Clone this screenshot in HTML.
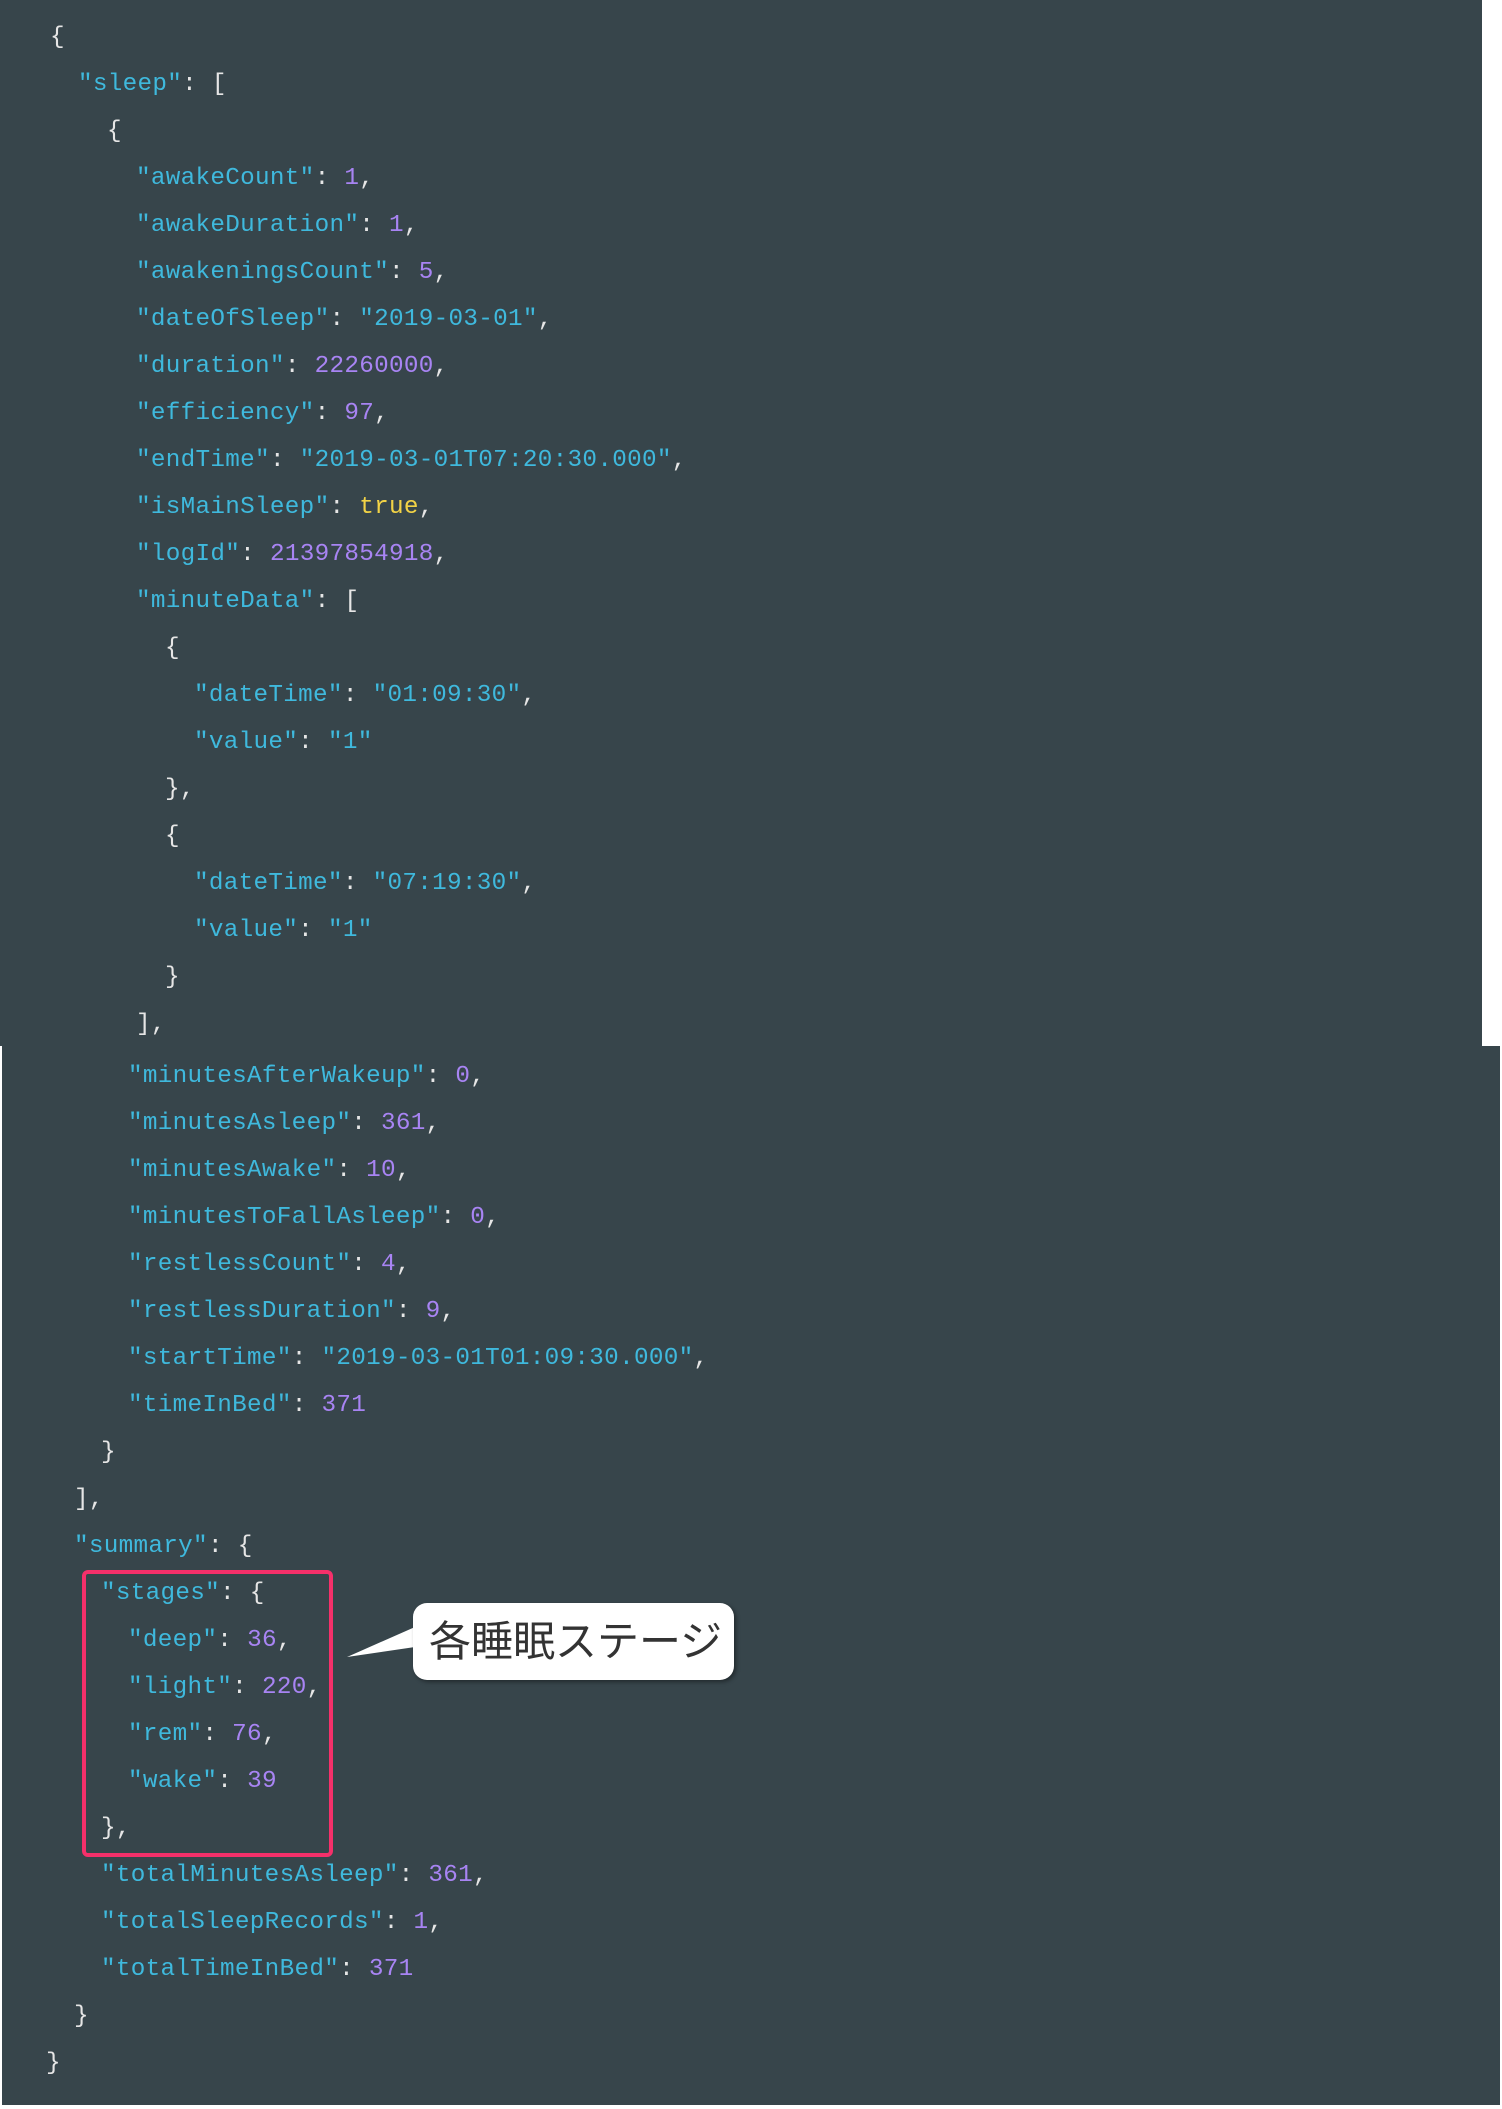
<!DOCTYPE html>
<html><head><meta charset="utf-8"><style>
body{margin:0;width:1502px;height:2109px;background:#fff;position:relative;overflow:hidden;font-family:"Liberation Mono",monospace;}
.p{position:absolute;background:#37454b;}
.l{position:absolute;height:47px;line-height:47px;font-size:24.3px;color:#e6e6e6;white-space:pre;letter-spacing:0.3px}
.k{color:#3fb9dd}.n{color:#a884f3}.s{color:#3fb9dd}.t{color:#f2d346}
</style></head><body>
<div class="p" style="left:0;top:0;width:1482px;height:1046px"></div>
<div class="p" style="left:2px;top:1046px;width:1498px;height:1059px"></div>
<div id="a"></div>
<div style="position:absolute;left:82px;top:1570px;width:243px;height:279px;border:4px solid #f5306a;border-radius:6px"></div>
<svg style="position:absolute;left:340px;top:1600px" width="400" height="90"><polygon points="7,57 75,27 75,47" fill="#fff"/></svg>
<div style="position:absolute;left:413px;top:1603px;width:321px;height:77px;background:#fff;border-radius:14px;box-shadow:2px 2px 4px rgba(0,0,0,.4);font-family:'Liberation Sans','Noto Sans CJK JP',sans-serif;font-size:42px;line-height:77px;color:#333;padding-left:16px;box-sizing:border-box">各睡眠ステージ</div>
<script></script>
<div class="l" style="left:50px;top:14px">{</div>
<div class="l" style="left:78px;top:61px"><span class="k">"sleep"</span>: [</div>
<div class="l" style="left:107px;top:108px">{</div>
<div class="l" style="left:136px;top:155px"><span class="k">"awakeCount"</span>: <span class="n">1</span>,</div>
<div class="l" style="left:136px;top:202px"><span class="k">"awakeDuration"</span>: <span class="n">1</span>,</div>
<div class="l" style="left:136px;top:249px"><span class="k">"awakeningsCount"</span>: <span class="n">5</span>,</div>
<div class="l" style="left:136px;top:296px"><span class="k">"dateOfSleep"</span>: <span class="s">"2019-03-01"</span>,</div>
<div class="l" style="left:136px;top:343px"><span class="k">"duration"</span>: <span class="n">22260000</span>,</div>
<div class="l" style="left:136px;top:390px"><span class="k">"efficiency"</span>: <span class="n">97</span>,</div>
<div class="l" style="left:136px;top:437px"><span class="k">"endTime"</span>: <span class="s">"2019-03-01T07:20:30.000"</span>,</div>
<div class="l" style="left:136px;top:484px"><span class="k">"isMainSleep"</span>: <span class="t">true</span>,</div>
<div class="l" style="left:136px;top:531px"><span class="k">"logId"</span>: <span class="n">21397854918</span>,</div>
<div class="l" style="left:136px;top:578px"><span class="k">"minuteData"</span>: [</div>
<div class="l" style="left:165px;top:625px">{</div>
<div class="l" style="left:194px;top:672px"><span class="k">"dateTime"</span>: <span class="s">"01:09:30"</span>,</div>
<div class="l" style="left:194px;top:719px"><span class="k">"value"</span>: <span class="s">"1"</span></div>
<div class="l" style="left:165px;top:766px">},</div>
<div class="l" style="left:165px;top:813px">{</div>
<div class="l" style="left:194px;top:860px"><span class="k">"dateTime"</span>: <span class="s">"07:19:30"</span>,</div>
<div class="l" style="left:194px;top:907px"><span class="k">"value"</span>: <span class="s">"1"</span></div>
<div class="l" style="left:165px;top:954px">}</div>
<div class="l" style="left:136px;top:1001px">],</div>
<div class="l" style="left:128px;top:1053px"><span class="k">"minutesAfterWakeup"</span>: <span class="n">0</span>,</div>
<div class="l" style="left:128px;top:1100px"><span class="k">"minutesAsleep"</span>: <span class="n">361</span>,</div>
<div class="l" style="left:128px;top:1147px"><span class="k">"minutesAwake"</span>: <span class="n">10</span>,</div>
<div class="l" style="left:128px;top:1194px"><span class="k">"minutesToFallAsleep"</span>: <span class="n">0</span>,</div>
<div class="l" style="left:128px;top:1241px"><span class="k">"restlessCount"</span>: <span class="n">4</span>,</div>
<div class="l" style="left:128px;top:1288px"><span class="k">"restlessDuration"</span>: <span class="n">9</span>,</div>
<div class="l" style="left:128px;top:1335px"><span class="k">"startTime"</span>: <span class="s">"2019-03-01T01:09:30.000"</span>,</div>
<div class="l" style="left:128px;top:1382px"><span class="k">"timeInBed"</span>: <span class="n">371</span></div>
<div class="l" style="left:101px;top:1429px">}</div>
<div class="l" style="left:74px;top:1476px">],</div>
<div class="l" style="left:74px;top:1523px"><span class="k">"summary"</span>: {</div>
<div class="l" style="left:101px;top:1570px"><span class="k">"stages"</span>: {</div>
<div class="l" style="left:128px;top:1617px"><span class="k">"deep"</span>: <span class="n">36</span>,</div>
<div class="l" style="left:128px;top:1664px"><span class="k">"light"</span>: <span class="n">220</span>,</div>
<div class="l" style="left:128px;top:1711px"><span class="k">"rem"</span>: <span class="n">76</span>,</div>
<div class="l" style="left:128px;top:1758px"><span class="k">"wake"</span>: <span class="n">39</span></div>
<div class="l" style="left:101px;top:1805px">},</div>
<div class="l" style="left:101px;top:1852px"><span class="k">"totalMinutesAsleep"</span>: <span class="n">361</span>,</div>
<div class="l" style="left:101px;top:1899px"><span class="k">"totalSleepRecords"</span>: <span class="n">1</span>,</div>
<div class="l" style="left:101px;top:1946px"><span class="k">"totalTimeInBed"</span>: <span class="n">371</span></div>
<div class="l" style="left:74px;top:1993px">}</div>
<div class="l" style="left:46px;top:2040px">}</div>
</body></html>
